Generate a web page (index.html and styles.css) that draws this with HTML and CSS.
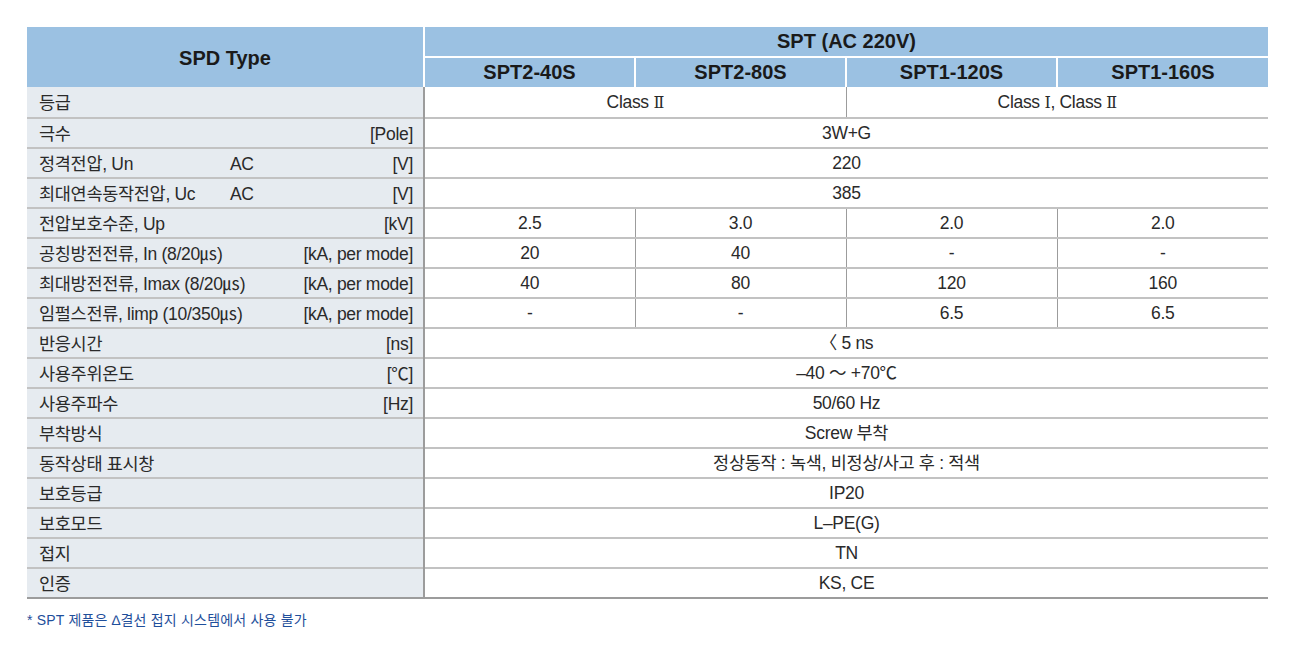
FILE: index.html
```html
<!DOCTYPE html>
<html lang="ko">
<head>
<meta charset="utf-8">
<link rel="stylesheet" href="styles.css">
</head>
<body>
<div class="wrap">
<table class="spec">
  <colgroup>
    <col class="c-label"><col class="c-val"><col class="c-val"><col class="c-val"><col class="c-val">
  </colgroup>
  <thead>
    <tr class="h1">
      <th rowspan="2" class="th-type">SPD Type</th>
      <th colspan="4">SPT (AC 220V)</th>
    </tr>
    <tr class="h2">
      <th>SPT2-40S</th><th>SPT2-80S</th><th>SPT1-120S</th><th>SPT1-160S</th>
    </tr>
  </thead>
  <tbody>
    <tr><td class="lbl"><div class="l"><span class="n">등급</span></div></td><td colspan="2">Class <span class="rn">Ⅱ</span></td><td colspan="2">Class <span class="rn">Ⅰ</span>, Class <span class="rn">Ⅱ</span></td></tr>
    <tr><td class="lbl"><div class="l"><span class="n">극수</span><span class="u">[Pole]</span></div></td><td colspan="4">3W+G</td></tr>
    <tr><td class="lbl"><div class="l has-ac"><span class="n">정격전압, Un</span><span class="ac">AC</span><span class="u">[V]</span></div></td><td colspan="4">220</td></tr>
    <tr><td class="lbl"><div class="l has-ac"><span class="n">최대연속동작전압, Uc</span><span class="ac">AC</span><span class="u">[V]</span></div></td><td colspan="4">385</td></tr>
    <tr><td class="lbl"><div class="l"><span class="n">전압보호수준, Up</span><span class="u">[kV]</span></div></td><td>2.5</td><td>3.0</td><td>2.0</td><td>2.0</td></tr>
    <tr><td class="lbl"><div class="l"><span class="n">공칭방전전류, In (8/20㎲)</span><span class="u">[kA, per mode]</span></div></td><td>20</td><td>40</td><td>-</td><td>-</td></tr>
    <tr><td class="lbl"><div class="l"><span class="n">최대방전전류, Imax (8/20㎲)</span><span class="u">[kA, per mode]</span></div></td><td>40</td><td>80</td><td>120</td><td>160</td></tr>
    <tr><td class="lbl"><div class="l"><span class="n">임펄스전류, limp (10/350㎲)</span><span class="u">[kA, per mode]</span></div></td><td>-</td><td>-</td><td>6.5</td><td>6.5</td></tr>
    <tr><td class="lbl"><div class="l"><span class="n">반응시간</span><span class="u">[ns]</span></div></td><td colspan="4">〈 5 ns</td></tr>
    <tr><td class="lbl"><div class="l"><span class="n">사용주위온도</span><span class="u">[℃]</span></div></td><td colspan="4">–40 ～ +70℃</td></tr>
    <tr><td class="lbl"><div class="l"><span class="n">사용주파수</span><span class="u">[Hz]</span></div></td><td colspan="4">50/60 Hz</td></tr>
    <tr><td class="lbl"><div class="l"><span class="n">부착방식</span></div></td><td colspan="4">Screw 부착</td></tr>
    <tr><td class="lbl"><div class="l"><span class="n">동작상태 표시창</span></div></td><td colspan="4">정상동작 : 녹색, 비정상/사고 후 : 적색</td></tr>
    <tr><td class="lbl"><div class="l"><span class="n">보호등급</span></div></td><td colspan="4">IP20</td></tr>
    <tr><td class="lbl"><div class="l"><span class="n">보호모드</span></div></td><td colspan="4">L–PE(G)</td></tr>
    <tr><td class="lbl"><div class="l"><span class="n">접지</span></div></td><td colspan="4">TN</td></tr>
    <tr class="last"><td class="lbl"><div class="l"><span class="n">인증</span></div></td><td colspan="4">KS, CE</td></tr>
  </tbody>
</table>
<p class="note">* SPT 제품은 ∆결선 접지 시스템에서 사용 불가</p>
</div>
</body>
</html>
```

FILE: styles.css
```css
html, body {
  margin: 0;
  padding: 0;
  background: #ffffff;
}
body {
  font-family: "Liberation Sans", "Noto Sans CJK KR", sans-serif;
  color: #2a2a2a;
}
.wrap {
  padding: 27px 0 0 27px;
  width: 1241px;
}
.spec {
  border-collapse: collapse;
  table-layout: fixed;
  width: 1241px;
}
.c-label { width: 397px; }
.c-val { width: 211px; }

.spec th {
  background: #9bc1e2;
  color: #1a1a1a;
  font-weight: bold;
  font-size: 20px;
  height: 29px;
  padding: 0;
  border-left: 2px solid #ffffff;
  border-bottom: 2px solid #ffffff;
  text-align: center;
  vertical-align: middle;
  line-height: 29px;
}
.spec th.th-type {
  border-left: none;
  border-bottom: none;
  padding-top: 2px;
}
.spec .h2 th {
  border-bottom: none;
}
.spec td {
  height: 28px;
  padding: 0;
  font-size: 17.5px;
  line-height: 20px;
  text-align: center;
  vertical-align: middle;
  border-top: 2px solid #c2c2c2;
  border-left: 1px solid #9c9c9c;
  color: #2a2a2a;
  letter-spacing: -0.3px;
}
.spec tbody tr:first-child td {
  border-top: none;
  height: 30px;
}
.spec td.lbl {
  background: #e6ebf0;
  border-left: none;
  border-right: 2px solid #9c9c9c;
  text-align: left;
}
.spec tr.last td {
  border-bottom: 2px solid #9c9c9c;
}
.rn {
  font-family: "DejaVu Serif", "Liberation Serif", serif;
  font-size: 16px;
}
.l {
  display: flex;
  align-items: baseline;
  padding: 1px 10px 0 12px;
}
.l .n {
  white-space: nowrap;
}
.l.has-ac .n {
  width: 191px;
  flex: 0 0 191px;
}
.l .u {
  margin-left: auto;
  white-space: nowrap;
}
.note {
  margin: 10px 0 0 0;
  font-size: 14px;
  color: #1f4f9b;
  letter-spacing: 0.2px;
}
```
